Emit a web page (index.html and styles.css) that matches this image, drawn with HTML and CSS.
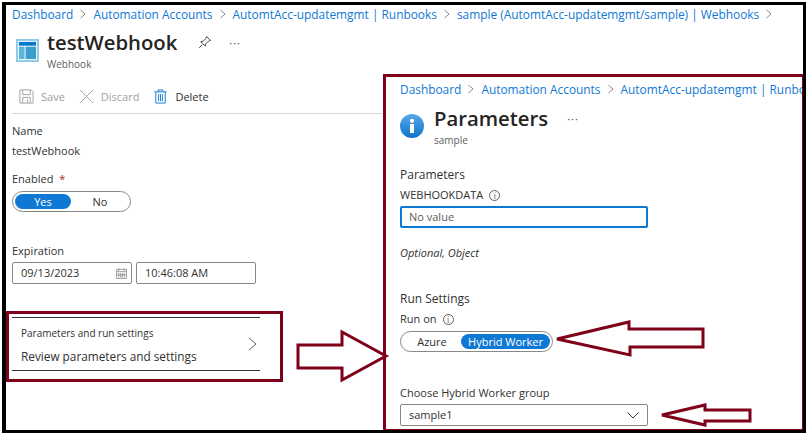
FILE: index.html
```html
<!DOCTYPE html>
<html lang="en">
<head>
<meta charset="utf-8">
<title>testWebhook</title>
<link rel="stylesheet" href="styles.css">
</head>
<body>
<div class="frame">
  <main class="blade">
    <nav class="crumbs">
      <a>Dashboard</a><svg class="sep" viewBox="0 0 8 10"><path d="M1.500 1l4.500 4-4.500 4" /></svg>
      <a>Automation Accounts</a><svg class="sep" viewBox="0 0 8 10"><path d="M1.500 1l4.500 4-4.500 4" /></svg>
      <a>AutomtAcc-updatemgmt | Runbooks</a><svg class="sep" viewBox="0 0 8 10"><path d="M1.500 1l4.500 4-4.500 4" /></svg>
      <a>sample (AutomtAcc-updatemgmt/sample) | Webhooks</a><svg class="sep" viewBox="0 0 8 10"><path d="M1.500 1l4.500 4-4.500 4" /></svg>
    </nav>
    <header class="head">
      <svg class="res-icon" viewBox="0 0 24 24">
        <rect x="0" y="0" width="24" height="24" fill="#8fcbe8"/>
        <rect x="2" y="2" width="20" height="20" fill="#fff"/>
        <rect x="3" y="3" width="18" height="4" fill="#0a78c8"/>
        <rect x="3" y="8" width="6" height="13" fill="#5fb4dc"/>
        <rect x="10" y="8" width="11" height="13" fill="#3b9dcb"/>
      </svg>
      <div class="head-text">
        <div class="title-row">
          <h1>testWebhook</h1>
          <svg class="pin" viewBox="0 0 14 14"><path d="M8.500 1.500l4 4-2.200.8-2.500 2.500-.4 2.400-4.600-4.600 2.400-.4 2.500-2.500zM4.300 9.700L1.200 12.800" /></svg>
          <span class="more">···</span>
        </div>
        <div class="subtitle">Webhook</div>
      </div>
    </header>
    <div class="toolbar">
      <span class="tool off">
        <svg viewBox="0 0 16 16"><path d="M1 1h12l2 2v12H1zM4 1v5h8V1M4 15V9h8v6M9 11v4" /></svg>Save
      </span>
      <span class="tool off">
        <svg viewBox="0 0 16 16"><path d="M1 1l14 14M15 1L1 15" /></svg>Discard
      </span>
      <span class="tool">
        <svg class="blue" viewBox="0 0 16 16"><path d="M1.500 3h13M5.500 3V1h5v2M3 3v12h10V3M6 5.500v7.500M8 5.500v7.500M10 5.500v7.500" /></svg>Delete
      </span>
    </div>
    <section class="form">
      <div class="lbl">Name</div>
      <div class="val">testWebhook</div>
      <div class="lbl enabled">Enabled <b>*</b></div>
      <div class="toggle yes"><span class="on">Yes</span><span>No</span></div>
      <div class="lbl expiration">Expiration</div>
      <div class="dates">
        <div class="field">09/13/2023
          <svg class="cal" viewBox="0 0 12 12"><path d="M.5 1.500h11v10H.5zM.5 4h11M3 3V.5M9 3V.5M3 5.500v5M5 5.500v5M7 5.500v5M9 5.500v5M1 7.500h10" /></svg>
        </div>
        <div class="field">10:46:08 AM</div>
      </div>
      <div class="review-box">
        <div class="review">
          <div>
            <div class="r1">Parameters and run settings</div>
            <div class="r2">Review parameters and settings</div>
          </div>
          <svg class="chev" viewBox="0 0 9 14"><path d="M1 1l7 6-7 6" /></svg>
        </div>
      </div>
    </section>
  </main>
  <aside class="panel">
    <nav class="crumbs pc">
      <a>Dashboard</a><svg class="sep" viewBox="0 0 8 10"><path d="M1.500 1l4.500 4-4.500 4" /></svg>
      <a>Automation Accounts</a><svg class="sep" viewBox="0 0 8 10"><path d="M1.500 1l4.500 4-4.500 4" /></svg>
      <a>AutomtAcc-updatemgmt | Runbooks</a>
    </nav>
    <header class="phead">
      <svg class="info" viewBox="0 0 24 24">
        <defs><linearGradient id="g" x1="0" y1="0" x2="0" y2="1"><stop offset="0" stop-color="#5aa8e6"/><stop offset="1" stop-color="#0c74cc"/></linearGradient></defs>
        <circle cx="12" cy="12" r="12" fill="url(#g)"/>
        <rect x="10" y="10" width="4" height="9" fill="#fff"/>
        <circle cx="12" cy="6.800" r="2.100" fill="#fff"/>
      </svg>
      <div>
        <div class="title-row ptitle"><h1>Parameters</h1><span class="more">···</span></div>
        <div class="subtitle">sample</div>
      </div>
    </header>
    <div class="sec">Parameters</div>
    <div class="lbl2">WEBHOOKDATA <i class="ii">i</i></div>
    <div class="input focus">No value</div>
    <div class="hint">Optional, Object</div>
    <div class="sec runs">Run Settings</div>
    <div class="lbl2">Run on <i class="ii">i</i></div>
    <div class="toggle hybrid"><span>Azure</span><span class="on">Hybrid Worker</span></div>
    <div class="lbl2 choose">Choose Hybrid Worker group</div>
    <div class="input select">sample1
      <svg viewBox="0 0 12 7"><path d="M.5.500L6 6 11.500.500" /></svg>
    </div>
  </aside>
  <svg class="arrows" viewBox="0 0 806 438">
    <path d="M298 345H342V332L386 356 342 380V368H298Z"/>
    <path d="M557 339L629 322V329H703V347H630V355Z"/>
    <path d="M662 415L705 405V410H750V421H705V425Z"/>
  </svg>
</div>
</body>
</html>
```
FILE: styles.css
```css
* { box-sizing: border-box; }
html, body { margin: 0; padding: 0; background: #fff; }
body {
  width: 806px; height: 438px; overflow: hidden;
  font-family: "Open Sans", "Noto Sans", sans-serif;
  color: #323130;
}
.frame {
  position: relative;
  width: 804px; height: 431px;
  margin: 2px 0 0 2px;
  border: solid #000;
  border-width: 3px 3px 3px 4px;
  overflow: hidden;
}
.blade { margin-top: -1px; padding: 0 0 0 6px; }
.crumbs { display: flex; align-items: center; height: 20px; font-size: 11.9px; color: #0f78d4; white-space: nowrap; }
.crumbs a { display: block; flex: none; }
.sep { flex: none; width: 8px; height: 10px; margin: 0 6px; fill: none; stroke: #8a8886; stroke-width: 1; }
.head { display: flex; align-items: flex-start; margin-top: 5px; height: 47px; }
.res-icon { width: 23px; height: 23px; margin: 10px 0 0 4px; }
.head-text { margin-left: 8px; }
.title-row { display: flex; align-items: center; height: 26px; margin-bottom: 2px; }
h1 { margin: 0; font-size: 20.300px; font-weight: 600; line-height: 26px; color: #252423; }
.pin { width: 14px; height: 14px; margin-left: 21px; fill: none; stroke: #4a4a4a; stroke-width: 1; }
.more { margin-left: 17px; font-size: 11px; letter-spacing: 1px; color: #444; }
.subtitle { font-size: 10px; line-height: 14px; color: #605e5c; }
.toolbar { display: flex; align-items: center; gap: 14px; height: 34px; width: 370px; margin-top: 4px; border-bottom: 1px solid #d8d8d8; padding: 0 0 0 7px; font-size: 11px; }
.tool { display: flex; align-items: center; gap: 7px; }
.tool svg { width: 15px; height: 15px; fill: none; stroke: #111; stroke-width: 1; }
.tool.off { color: #a19f9d; }
.tool.off svg { stroke: #a19f9d; }
.tool svg.blue { stroke: #0f78d4; }
.form { font-size: 11px; padding-top: 9px; }
.lbl { line-height: 16px; }
.val { line-height: 16px; margin-top: 4px; }
.enabled { margin-top: 12px; }
.enabled b { color: #a4262c; font-weight: 400; margin-left: 3px; }
.toggle { display: flex; align-items: center; height: 21px; border: 1px solid #8a8886; border-radius: 11px; padding: 2px; font-size: 11px; }
.toggle span { display: block; text-align: center; line-height: 15px; border-radius: 8px; }
.toggle .on { background: #0f78d4; color: #fff; }
.yes { width: 119px; margin-top: 4px; }
.yes span { width: 56px; }
.yes span + span { margin-left: 1px; }
.expiration { margin-top: 31px; }
.dates { display: flex; gap: 4px; margin-top: 3px; }
.field { position: relative; width: 120px; height: 22px; border: 1px solid #8a8886; border-radius: 2px; padding-left: 8px; line-height: 20px; }
.cal { position: absolute; right: 4px; top: 5px; width: 11px; height: 11px; fill: none; stroke: #808080; stroke-width: .8; }
.review-box { width: 277px; height: 71px; margin: 27px 0 0 -6px; border: 3px solid #7f0019; padding: 3px 0 0 3px; }
.review { display: flex; align-items: center; justify-content: space-between; width: 248px; height: 54px; border-top: 1px solid #323130; border-bottom: 1px solid #323130; padding: 2px 3px 0 9px; }
.r1 { font-size: 10px; line-height: 15px; }
.r2 { font-size: 11.800px; line-height: 16px; margin-top: 7px; }
.chev { width: 9px; height: 14px; fill: none; stroke: #605e5c; stroke-width: 1; margin-top: -2px; }
.panel {
  position: absolute; left: 377px; top: 69px;
  width: 422px; height: 358px;
  border: 3px solid #7f0019;
  padding: 2px 0 0 14px;
  background: #fff;
  overflow: hidden;
}
.pc { height: 20px; }
.phead { display: flex; align-items: center; margin-top: 4px; height: 46px; }
.info { width: 24px; height: 24px; margin-right: 10px; }
.ptitle { height: 26px; }
.ptitle .more { margin-left: 19px; }
.sec { margin-top: 17px; font-size: 12px; line-height: 17px; }
.lbl2 { display: flex; align-items: center; font-size: 11px; line-height: 16px; margin-top: 4px; }
.ii { display: inline-flex; align-items: center; justify-content: center; width: 11px; height: 11px; margin-left: 6px; border: 1px solid #605e5c; border-radius: 50%; font: normal 8px "Noto Sans", sans-serif; color: #605e5c; }
.input { position: relative; width: 248px; height: 22px; margin-top: 3px; padding-left: 8px; border-radius: 2px; font-size: 11px; line-height: 20px; border: 1px solid #8a8886; }
.focus { border: 2px solid #0f78d4; line-height: 18px; padding-left: 7px; color: #605e5c; }
.hint { margin-top: 17px; font-size: 11px; font-style: italic; line-height: 16px; }
.runs { margin-top: 29px; }
.hybrid { width: 153px; margin-top: 4px; }
.hybrid span:first-child { width: 58px; }
.hybrid .on { width: 89px; }
.choose { margin-top: 33px; }
.select svg { position: absolute; right: 8px; top: 7px; width: 12px; height: 7px; fill: none; stroke: #323130; stroke-width: 1; }
.select { margin-top: 3px; }
.arrows { position: absolute; left: -6px; top: -5px; width: 806px; height: 438px; fill: none; stroke: #7f0019; stroke-width: 3; pointer-events: none; }
```
